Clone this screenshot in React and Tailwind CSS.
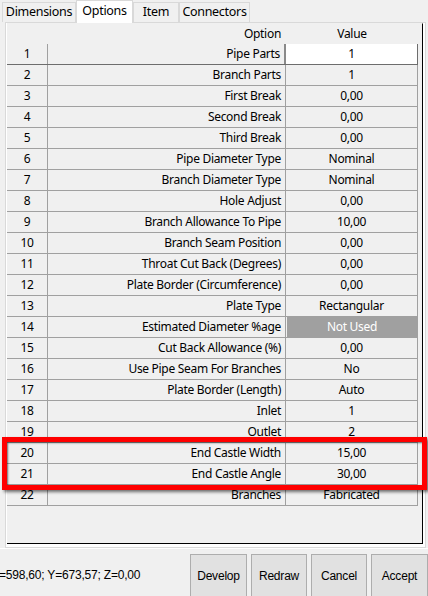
import React from 'react'

const rows = [
    ['Pipe Parts', '1'],
    ['Branch Parts', '1'],
    ['First Break', '0,00'],
    ['Second Break', '0,00'],
    ['Third Break', '0,00'],
    ['Pipe Diameter Type', 'Nominal'],
    ['Branch Diameter Type', 'Nominal'],
    ['Hole Adjust', '0,00'],
    ['Branch Allowance To Pipe', '10,00'],
    ['Branch Seam Position', '0,00'],
    ['Throat Cut Back (Degrees)', '0,00'],
    ['Plate Border (Circumference)', '0,00'],
    ['Plate Type', 'Rectangular'],
    ['Estimated Diameter %age', 'Not Used'],
    ['Cut Back Allowance (%)', '0,00'],
    ['Use Pipe Seam For Branches', 'No'],
    ['Plate Border (Length)', 'Auto'],
    ['Inlet', '1'],
    ['Outlet', '2'],
    ['End Castle Width', '15,00'],
    ['End Castle Angle', '30,00'],
    ['Branches', 'Fabricated'],
]

function Tab({ label, active, w }) {
    if (active) {
        return (
            <div className={`${w} h-[23px] -mb-px bg-white border border-b-0 border-[#d9d9d9] flex items-center justify-center pb-[2px] z-10 text-[12.5px]`}>
                {label}
            </div>
        )
    }
    return (
        <div className={`${w} h-[20px] bg-[#f0f0f0] border border-b-0 border-[#d9d9d9] flex items-center justify-center text-[12.5px]`}>
            {label}
        </div>
    )
}

function Row({ n, option, value }) {
    const first = n === 1
    const disabled = value === 'Not Used'
    let valueCls = 'w-[132px] border-r border-[#a0a0a0] flex items-center justify-center'
    if (first) valueCls = 'w-[132px] bg-white border-r border-[#6d6d6d] flex items-center justify-center'
    if (disabled) valueCls = 'w-[132px] bg-[#a0a0a0] text-white border-r border-[#a0a0a0] border-l border-l-[#f0f0f0] flex items-center justify-center'
    return (
        <div className={`flex h-[21px] w-[411px] border-b ${first ? 'border-[#6d6d6d]' : 'border-[#a0a0a0]'}`}>
            <div className="w-[41px] border-r border-[#a0a0a0] flex items-center justify-center">{n}</div>
            <div className={`w-[238px] border-r ${first ? 'border-r-2 border-[#8a8a8a]' : 'border-[#a0a0a0]'} flex items-center justify-end pr-[4px]`}>{option}</div>
            <div className={valueCls}>{value}</div>
        </div>
    )
}

export default function App() {
    return (
        <div className="w-[428px] h-[596px] bg-[#f0f0f0] relative overflow-hidden text-[12px] tracking-[-0.3px] text-black" style={{ fontFamily: '"Noto Sans", sans-serif' }}>
            <div className="flex items-end h-[22px] pl-[2px] relative z-10">
                <Tab label="Dimensions" w="w-[74px]" />
                <Tab label="Options" w="w-[57px]" active />
                <Tab label="Item" w="w-[46px]" />
                <Tab label="Connectors" w="w-[71px]" />
            </div>
            <div className="ml-[5px] w-[421px] h-[526px] bg-white border border-[#d9d9d9] pl-px pt-0">
                <div className="w-[416px] h-[521px] bg-[#f0f0f0] border-r border-b border-black border-t border-t-[#f0f0f0]">
                    <div className="flex h-[20px] w-[411px]">
                        <div className="w-[41px]"></div>
                        <div className="w-[238px] flex items-center justify-end pr-[5px]">Option</div>
                        <div className="w-[132px] flex items-center justify-center">Value</div>
                    </div>
                    {rows.map((r, i) => (
                        <Row key={i} n={i + 1} option={r[0]} value={r[1]} />
                    ))}
                </div>
            </div>
            <div className="flex items-start pt-[5px] border-t border-white tracking-[-0.2px]">
                <div className="flex-1 h-[42px] flex items-center -ml-px whitespace-nowrap" style={{ fontFamily: '"Liberation Sans", sans-serif' }}>
                    =598,60; Y=673,57; Z=0,00
                </div>
                <div className="flex gap-[4px]" style={{ fontFamily: '"Liberation Sans", sans-serif' }}>
                    <button className="w-[57px] h-[44px] bg-[#e1e1e1] border border-[#adadad] text-[12px]">Develop</button>
                    <button className="w-[56px] h-[44px] bg-[#e1e1e1] border border-[#adadad] text-[12px]">Redraw</button>
                    <button className="w-[56px] h-[44px] bg-[#e1e1e1] border border-[#adadad] text-[12px]">Cancel</button>
                    <button className="w-[57px] h-[44px] bg-[#e1e1e1] border border-[#adadad] text-[12px]">Accept</button>
                </div>
            </div>
            <div className="absolute left-[2px] top-[437px] w-[425px] h-[53px] border-[5px] border-[#ff0000] shadow-[inset_1px_1px_2px_rgba(0,0,0,0.55),2px_2px_3px_rgba(0,0,0,0.55)]"></div>
        </div>
    )
}
